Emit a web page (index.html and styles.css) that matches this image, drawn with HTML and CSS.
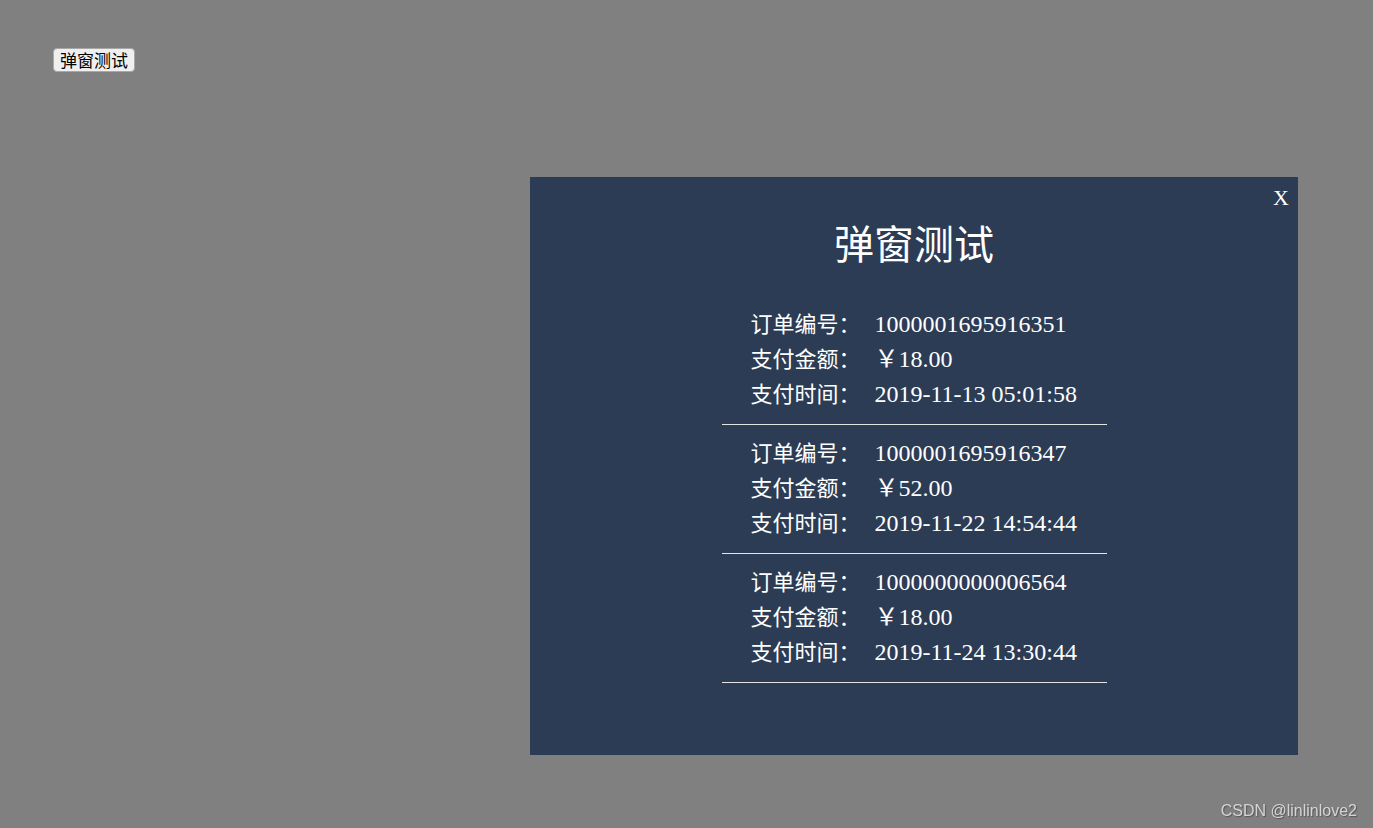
FILE: index.html
```html
<!DOCTYPE html>
<html lang="zh-CN">
<head>
<meta charset="utf-8">
<title>弹窗测试</title>
<link rel="stylesheet" href="styles.css">
</head>
<body>
<button class="open-btn" type="button">弹窗测试</button>

<div class="overlay">
  <div class="modal">
    <span class="close">X</span>
    <h1 class="modal-title">弹窗测试</h1>
    <ul class="orders">
      <li class="order">
        <div class="row"><span class="label">订单编号：</span><span class="value">1000001695916351</span></div>
        <div class="row"><span class="label">支付金额：</span><span class="value">￥18.00</span></div>
        <div class="row"><span class="label">支付时间：</span><span class="value">2019-11-13 05:01:58</span></div>
      </li>
      <li class="order">
        <div class="row"><span class="label">订单编号：</span><span class="value">1000001695916347</span></div>
        <div class="row"><span class="label">支付金额：</span><span class="value">￥52.00</span></div>
        <div class="row"><span class="label">支付时间：</span><span class="value">2019-11-22 14:54:44</span></div>
      </li>
      <li class="order">
        <div class="row"><span class="label">订单编号：</span><span class="value">1000000000006564</span></div>
        <div class="row"><span class="label">支付金额：</span><span class="value">￥18.00</span></div>
        <div class="row"><span class="label">支付时间：</span><span class="value">2019-11-24 13:30:44</span></div>
      </li>
    </ul>
  </div>
</div>

<div class="watermark">CSDN @linlinlove2</div>
</body>
</html>
```

FILE: styles.css
```css
html, body {
  margin: 0;
  padding: 0;
  width: 100%;
  height: 100%;
}

body {
  background: #808080;
  font-family: "Noto Sans CJK SC", sans-serif;
  overflow: hidden;
}

.open-btn {
  display: block;
  margin: 48px 0 0 53px;
  padding: 0 6px;
  height: 24px;
  font-family: "Noto Sans CJK SC", sans-serif;
  font-size: 17px;
  line-height: 22px;
  color: #000;
  background: #efefef;
  border: 1px solid #a8a8a8;
  border-radius: 4px;
}

.overlay {
  position: fixed;
  inset: 0;
}

.modal {
  position: absolute;
  left: 530px;
  top: 177px;
  width: 768px;
  height: 578px;
  box-sizing: border-box;
  padding-top: 45px;
  background: #2b3c54;
  color: #fff;
}

.close {
  position: absolute;
  top: 10px;
  right: 9px;
  font-family: "Liberation Serif", serif;
  font-size: 22px;
  line-height: 22px;
  color: #fff;
}

.modal-title {
  margin: 0 0 34px;
  text-align: center;
  font-family: "Noto Sans CJK SC", sans-serif;
  font-size: 40px;
  font-weight: normal;
  line-height: 40px;
}

.orders {
  list-style: none;
  margin: 0 auto;
  padding: 0;
  width: 385px;
}

.order {
  padding: 9px 0 14px 29px;
  border-bottom: 1px solid #e4e4e4;
}

.row {
  display: flex;
  align-items: baseline;
  height: 35px;
  line-height: 35px;
}

.label {
  width: 124px;
  flex: none;
  font-family: "Noto Sans CJK SC", sans-serif;
  font-size: 22px;
}

.value {
  font-family: "Liberation Serif", "Noto Sans CJK SC", serif;
  font-size: 24px;
}

.watermark {
  position: fixed;
  right: 16px;
  bottom: 8px;
  font-family: "Liberation Sans", Arial, sans-serif;
  font-size: 16px;
  color: #d4d4d4;
  text-shadow: 1px 1px 1px rgba(0, 0, 0, 0.35);
}
```
